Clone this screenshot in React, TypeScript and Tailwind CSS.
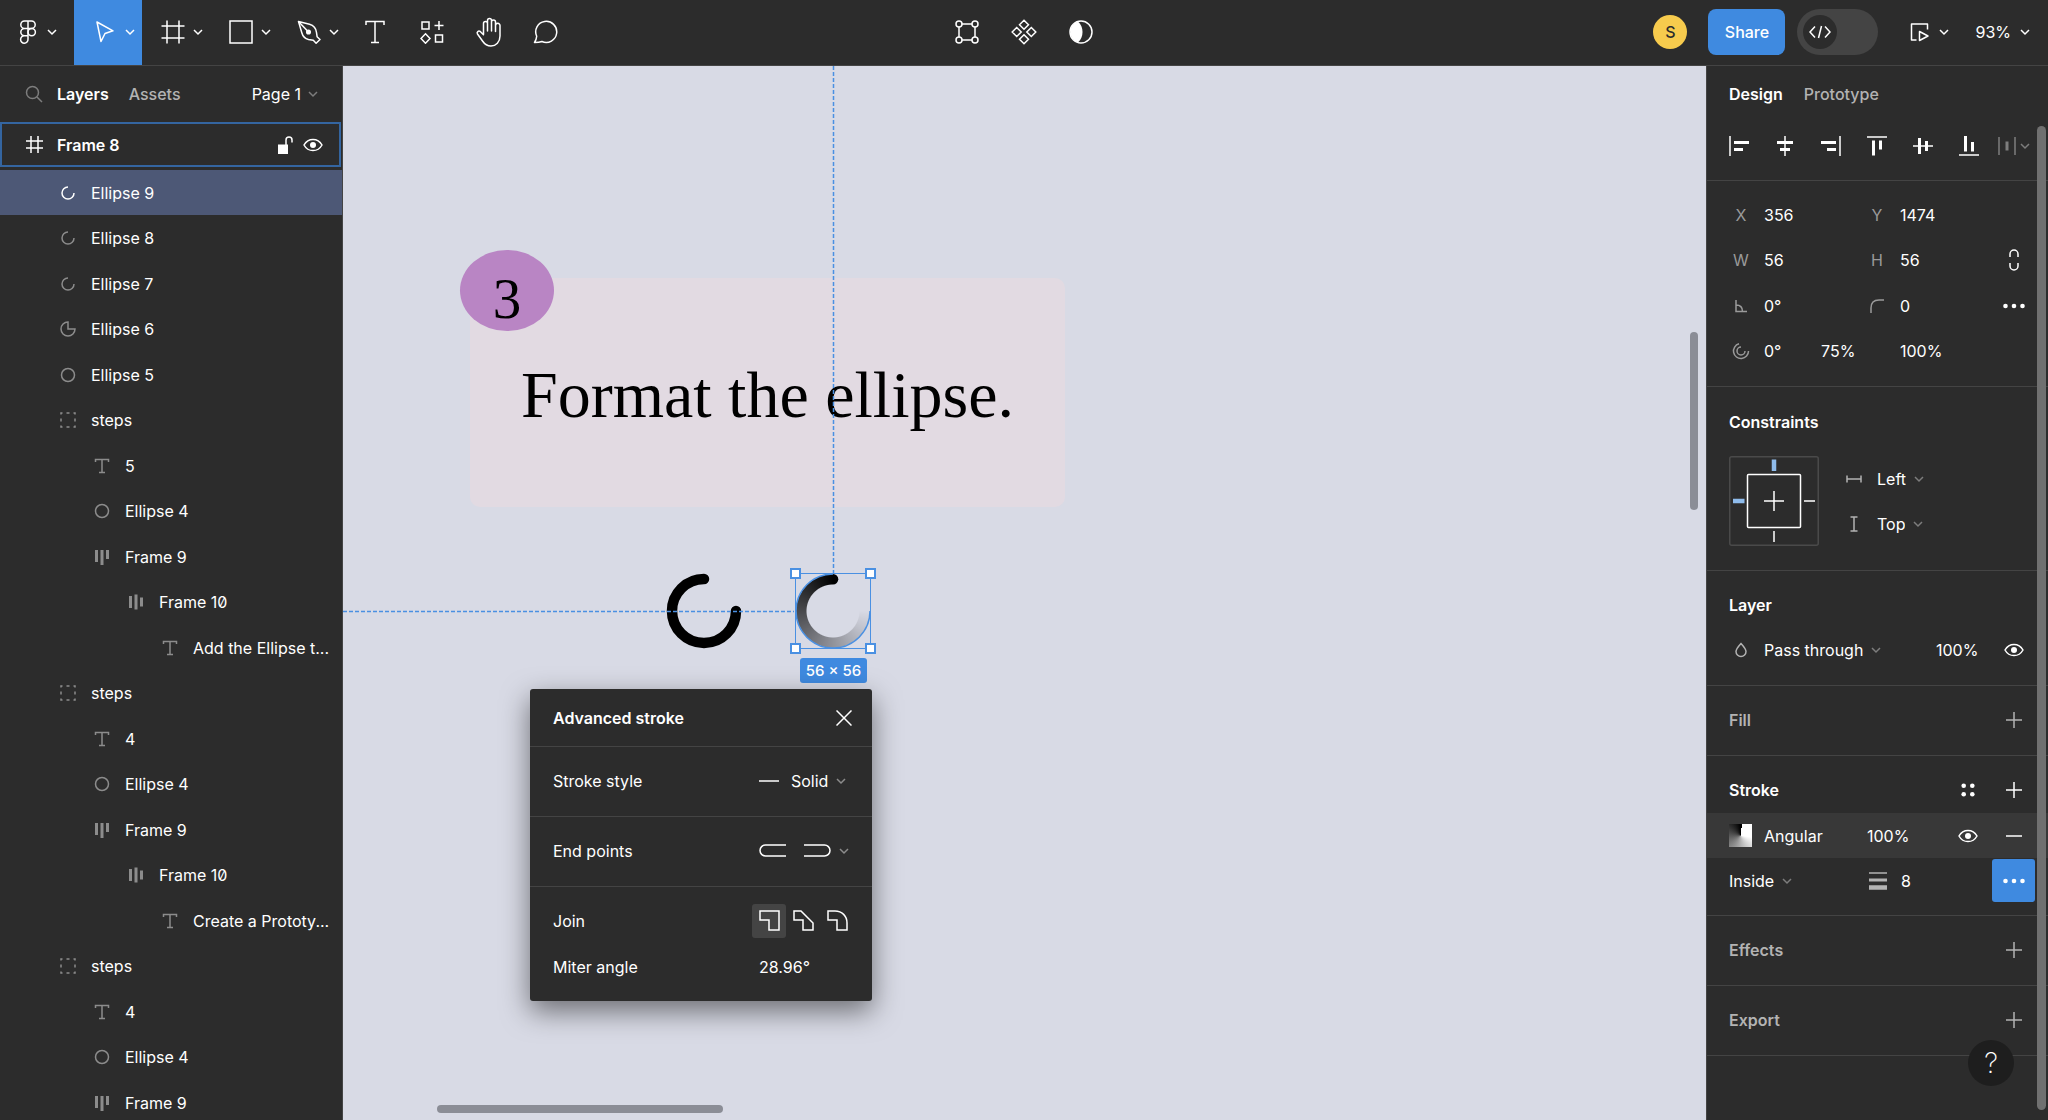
import type { ReactNode } from 'react';

const FONT = "font-['Inter','Liberation_Sans',sans-serif]";

interface SvgProps {
  w?: number;
  h?: number;
  sw?: number;
  className?: string;
  children: ReactNode;
}

function Svg({ w = 24, h = 24, sw = 1.5, className = '', children }: SvgProps) {
  return (
    <svg width={w} height={h} viewBox={`0 0 ${w} ${h}`} fill="none" stroke="currentColor" strokeWidth={sw}
      className={`shrink-0 ${className}`} aria-hidden="true">
      {children}
    </svg>
  );
}

const Chevron = ({ className = '' }: { className?: string }) => (
  <Svg w={10} h={10} className={className}><path d="M1 3l4 4 4-4" /></Svg>
);

const Plus = () => <Svg w={16} h={16}><path d="M8 0v16M0 8h16" /></Svg>;

const Dots = () => (
  <Svg w={22} h={6}>
    <g fill="currentColor" stroke="none"><circle cx="2.5" cy="3" r="2.3" /><circle cx="11" cy="3" r="2.3" /><circle cx="19.5" cy="3" r="2.3" /></g>
  </Svg>
);

const Eye = () => (
  <Svg w={20} h={14}>
    <path d="M1 7c2-3.6 5-5.6 9-5.6S17 3.400 19 7c-2 3.600-5 5.600-9 5.600S3 10.600 1 7z" />
    <circle cx="10" cy="7" r="3" fill="currentColor" stroke="none" />
  </Svg>
);

/* ---------- Toolbar ---------- */

const tools = [
  { name: 'Move', active: true, icon: <Svg><path d="M4 2l16 8.800-8 2.700L8 21.500z" strokeLinejoin="round" /></Svg> },
  { name: 'Frame', icon: <Svg><path d="M6 .5v23M18 .5v23M.5 6h23M.5 18h23" /></Svg> },
  { name: 'Rectangle', icon: <Svg><rect x="1" y="1" width="22" height="22" /></Svg> },
  {
    name: 'Pen',
    icon: (
      <Svg>
        <path d="M1.500 1.500l11 2.800c4 1.200 6.500 4 7 8.200l.6 4.200 2.900 2.800-3.900 3.700-2.800-2.900-4.800-.8c-3.700-.8-5.700-3-6.700-6.700z" strokeLinejoin="round" />
        <path d="M1.500 1.500l9.500 10" />
        <circle cx="11.500" cy="12" r="1.800" fill="currentColor" />
      </Svg>
    ),
  },
];

const plainTools = [
  { name: 'Text', icon: <Svg><path d="M3 5V1.500h18V5M12 1.500v21M8 22.500h8" /></Svg> },
  {
    name: 'Resources',
    icon: <Svg><path d="M2 2h7v7H2zM15.500 15h7v7h-7zM19 1v9M14.500 5.500h9M5.500 13.800l4.500 4.700-4.500 4.700L1 18.500z" /></Svg>,
  },
  {
    name: 'Hand',
    icon: (
      <Svg w={28} h={30}>
        <path d="M8.500 17V6.500a2 2 0 0 1 4 0V14m0-8V3.500a2 2 0 0 1 4 0V14m0-9a2 2 0 0 1 4 0v9.500m0-6a2 2 0 0 1 4.500 0V19c0 6-4 10-9 10-4.500 0-6.500-2-8.500-5l-5-7c-1.200-2 1-3.800 3-2.300l3 3" strokeLinejoin="round" strokeLinecap="round" />
      </Svg>
    ),
  },
  { name: 'Comment', icon: <Svg w={26}><path d="M1.500 22.500c1.200-1.800 2-3.800 2.200-6.200a10.500 10.500 0 1 1 5.300 5.200c-2.300.8-4.800 1-7.500 1z" strokeLinejoin="round" /></Svg> },
];

const centerTools = [
  {
    name: 'Edit object',
    icon: (
      <Svg>
        <circle cx="4" cy="4" r="3" /><circle cx="20" cy="4" r="3" /><circle cx="4" cy="20" r="3" /><circle cx="20" cy="20" r="3" />
        <path d="M7 4h10M7 20h10M4 7v10M20 7v10" />
      </Svg>
    ),
  },
  {
    name: 'Create component',
    icon: (
      <Svg w={26} h={26}>
        <path d="M13 1.200l4.500 4.500-4.500 4.500-4.500-4.500zM13 15.800l4.500 4.500-4.500 4.500-4.500-4.500zM5.700 8.500l4.500 4.500-4.500 4.500L1.200 13zM20.300 8.500l4.500 4.500-4.500 4.500-4.500-4.500z" />
      </Svg>
    ),
  },
  {
    name: 'Use as mask',
    icon: <Svg><circle cx="12" cy="12" r="11" /><path d="M9 1.500c6 5.500 6 15.500 0 21A11 11 0 0 1 9 1.500z" fill="currentColor" stroke="none" /></Svg>,
  },
];

function Toolbar() {
  return (
    <header className="grid grid-cols-[1fr_auto_1fr] h-[66px] shrink-0 border-b border-[#444444]">
      <div className="flex">
        <button aria-label="Main menu" className="flex items-center gap-[7px] pl-4 pb-0.5 w-[74px]">
          <Svg>
            <path d="M12 1H8.500a3.700 3.700 0 0 0 0 7.400H12zM12 8.400H8.500a3.700 3.700 0 0 0 0 7.400H12zM12 1h3.500a3.700 3.700 0 0 1 0 7.400H12zM12 15.800v3.500a3.700 3.700 0 1 1-3.500-3.500z" />
            <circle cx="15.700" cy="12.100" r="3.700" />
          </Svg>
          <Chevron />
        </button>
        {tools.map((t) => (
          <button key={t.name} aria-label={t.name}
            className={`flex items-center gap-2 pl-[19px] pb-0.5 w-[68px] ${t.active ? 'bg-[#3f8ae0]' : ''}`}>
            {t.icon}
            <Chevron />
          </button>
        ))}
        {plainTools.map((t) => (
          <button key={t.name} aria-label={t.name} className="flex items-center justify-center pb-0.5 w-[57px]">{t.icon}</button>
        ))}
      </div>

      <div className="flex">
        {centerTools.map((t) => (
          <button key={t.name} aria-label={t.name} className="flex items-center justify-center pb-0.5 w-[57px]">{t.icon}</button>
        ))}
      </div>

      <div className="flex items-center justify-end pr-[18px] pb-0.5">
        <span className="flex items-center justify-center size-[34px] mr-[21px] rounded-full bg-[#f7cb4d] text-[#2c2c2c] font-medium">S</span>
        <button className="h-[46px] w-[77px] mr-3 rounded-lg bg-[#3f8ae0] font-medium">Share</button>
        <label className="flex items-center w-[81px] h-[46px] px-1.5 mr-8 rounded-full bg-[#444444]">
          <input type="checkbox" role="switch" aria-label="Dev Mode" className="sr-only" />
          <span className="flex items-center justify-center size-[34px] rounded-full bg-[#2c2c2c]">
            <Svg w={22} h={14}><path d="M6 1.500L1 7l5 5.500M16 1.500L21 7l-5 5.500M12.500 1l-3 12" /></Svg>
          </span>
        </label>
        <button aria-label="Present" className="flex items-center gap-[9px] mr-[26px]">
          <Svg w={20} h={20}><path d="M6.500 18H1.500V2h16v5.500M9.500 9.500v9l8.500-4.500z" strokeLinejoin="round" /></Svg>
          <Chevron />
        </button>
        <button className="flex items-center gap-[9px]">93% <Chevron /></button>
      </div>
    </header>
  );
}

/* ---------- Layers panel ---------- */

const layerIcons = {
  arc: <Svg w={16} h={16}><path d="M8 2a6 6 0 1 0 6 6" /></Svg>,
  pie: <Svg w={16} h={16}><path d="M8 1a7 7 0 1 0 7 7H8z" /></Svg>,
  ellipse: <Svg w={16} h={16}><circle cx="8" cy="8" r="6.500" /></Svg>,
  group: <Svg w={16} h={16}><path d="M1 2.500V1h1.500M6.500 1h3M13.500 1H15v1.500M15 6.500v3M15 13.500V15h-1.500M9.500 15h-3M2.500 15H1v-1.500M1 9.500v-3" /></Svg>,
  text: <Svg w={16} h={16}><path d="M1.500 4V1.500h13V4M8 1.500v13M5 14.500h6" /></Svg>,
  top: <Svg w={16} h={16} sw={3}><path d="M2.500 1v12M8 1v15M13.500 1v9" /></Svg>,
  center: <Svg w={16} h={16} sw={3}><path d="M2.500 2v12M8 .5v15M13.500 3.500v9" /></Svg>,
};

type LayerKind = keyof typeof layerIcons;

const layers: { name: string; kind: LayerKind; depth: number; selected?: boolean }[] = [
  { name: 'Ellipse 9', kind: 'arc', depth: 0, selected: true },
  { name: 'Ellipse 8', kind: 'arc', depth: 0 },
  { name: 'Ellipse 7', kind: 'arc', depth: 0 },
  { name: 'Ellipse 6', kind: 'pie', depth: 0 },
  { name: 'Ellipse 5', kind: 'ellipse', depth: 0 },
  { name: 'steps', kind: 'group', depth: 0 },
  { name: '5', kind: 'text', depth: 1 },
  { name: 'Ellipse 4', kind: 'ellipse', depth: 1 },
  { name: 'Frame 9', kind: 'top', depth: 1 },
  { name: 'Frame 10', kind: 'center', depth: 2 },
  { name: 'Add the Ellipse t...', kind: 'text', depth: 3 },
  { name: 'steps', kind: 'group', depth: 0 },
  { name: '4', kind: 'text', depth: 1 },
  { name: 'Ellipse 4', kind: 'ellipse', depth: 1 },
  { name: 'Frame 9', kind: 'top', depth: 1 },
  { name: 'Frame 10', kind: 'center', depth: 2 },
  { name: 'Create a Prototy...', kind: 'text', depth: 3 },
  { name: 'steps', kind: 'group', depth: 0 },
  { name: '4', kind: 'text', depth: 1 },
  { name: 'Ellipse 4', kind: 'ellipse', depth: 1 },
  { name: 'Frame 9', kind: 'top', depth: 1 },
];

const indent = ['pl-[60px]', 'pl-[94px]', 'pl-[128px]', 'pl-[162px]'];

function LayersPanel() {
  return (
    <aside className="flex flex-col w-[343px] shrink-0 border-r border-[#444444] overflow-hidden">
      <div className="flex items-center h-14 shrink-0 pl-[25px] pr-6">
        <button aria-label="Search" className="mr-[14px] text-[#7d7d7d]">
          <Svg w={18} h={18}><circle cx="7.500" cy="7.500" r="6" /><path d="M12 12l5 5" /></Svg>
        </button>
        <button className="font-semibold">Layers</button>
        <button className="ml-5 font-medium text-[#b3b3b3]">Assets</button>
        <button className="flex items-center gap-[7px] ml-auto">Page 1 <Chevron className="text-[#7d7d7d]" /></button>
      </div>

      <div className="flex items-center h-[45px] shrink-0 pl-6 pr-4 mr-px border-2 border-[#3465a0]">
        <Svg w={17} h={17}><path d="M5 0v17M12 0v17M0 5h17M0 12h17" /></Svg>
        <span className="ml-[14px] font-semibold">Frame 8</span>
        <button aria-label="Unlock" className="ml-auto">
          <Svg w={15} h={18}><path d="M0 8.500h10V18H0z" fill="currentColor" stroke="none" /><path d="M8 9V4a3 3 0 0 1 6 0v2.500" /></Svg>
        </button>
        <button aria-label="Hide" className="ml-2.5"><Eye /></button>
      </div>

      <ul className="mt-[3px]">
        {layers.map((l, i) => (
          <li key={i}
            className={`flex items-center gap-[15px] odd:h-[45px] even:h-[46px] ${indent[l.depth]} ${l.selected ? 'bg-[#4d5876]' : ''}`}>
            <span className={l.selected ? 'text-white' : 'text-[#8c8c8c]'}>{layerIcons[l.kind]}</span>
            <span className="slashed-zero whitespace-nowrap">{l.name}</span>
          </li>
        ))}
      </ul>
    </aside>
  );
}

/* ---------- Canvas ---------- */

function Row({ label, children }: { label: string; children: ReactNode }) {
  return (
    <div className="flex items-center h-[70px] border-t border-[#444444] pl-[23px] pb-0.5">
      <span className="w-[206px]">{label}</span>
      {children}
    </div>
  );
}

const joins = [
  { name: 'Miter', on: true, d: 'M1 1h19v19h-10v-10H1z' },
  { name: 'Bevel', on: false, d: 'M1 1h7l12 12v7h-10v-10H1z' },
  { name: 'Round', on: false, d: 'M1 1h7c7 0 12 5 12 12v7h-10v-10H1z' },
];

function AdvancedStroke() {
  return (
    <section aria-label="Advanced stroke"
      className="absolute left-[187px] top-[623px] w-[342px] h-[312px] rounded-[3px] bg-[#2c2c2c] shadow-[0_10px_28px_rgba(0,0,0,0.5)]">
      <div className="flex items-center justify-between h-[57px] pl-[23px] pr-5">
        <h2 className="font-semibold">Advanced stroke</h2>
        <button aria-label="Close"><Svg w={16} h={16}><path d="M.5.500l15 15M15.500.500l-15 15" /></Svg></button>
      </div>
      <Row label="Stroke style">
        <Svg w={20} h={2}><path d="M0 1h20" /></Svg>
        <select aria-label="Stroke style" className="appearance-none field-sizing-content ml-3 mr-2"><option>Solid</option></select>
        <Chevron className="text-[#8c8c8c]" />
      </Row>
      <Row label="End points">
        <button aria-label="End points" className="flex items-center">
          <Svg w={27} h={13}><path d="M27 1H6.500a5.500 5.500 0 0 0 0 11H27" /></Svg>
          <Svg w={27} h={13} className="ml-[18px] mr-2"><path d="M0 1h20.500a5.500 5.500 0 0 1 0 11H0" /></Svg>
          <Chevron className="text-[#8c8c8c]" />
        </button>
      </Row>
      <Row label="Join">
        <div className="flex -ml-[7px]">
          {joins.map((j) => (
            <button key={j.name} aria-label={j.name}
              className={`flex items-center justify-center size-[34px] rounded-[3px] ${j.on ? 'bg-[#444444]' : ''}`}>
              <Svg w={21} h={21}><path d={j.d} /></Svg>
            </button>
          ))}
        </div>
      </Row>
      <div className="flex items-center h-[22px] pl-[23px]">
        <label htmlFor="miter" className="w-[206px]">Miter angle</label>
        <input id="miter" defaultValue="28.96°" className="w-20 bg-transparent" />
      </div>
    </section>
  );
}

function Canvas() {
  const handle = 'absolute size-[11px] bg-white border-2 border-[#4a90e2]';
  return (
    <main className="relative flex-1 min-w-0 overflow-hidden bg-[#d8dae5]">
      <div className="absolute left-[127px] top-[212px] w-[595px] h-[229px] flex items-center justify-center pt-1 rounded-[10px] bg-[#e2dae2] text-black">
        <p className="font-['Liberation_Serif',serif] text-[66px] leading-[70px] whitespace-nowrap">Format the ellipse.</p>
      </div>
      <div className="absolute left-[117px] top-[184px] w-[94px] h-[81px] flex items-center justify-center pt-4 rounded-[50%] bg-[#b985c4] text-black font-['Liberation_Serif',serif] text-[57px] leading-[60px]">
        3
      </div>

      {/* Plain ring and distance guides */}
      <svg className="absolute left-0 top-0 w-full h-full pointer-events-none" aria-hidden="true">
        <path d="M361 513a32 32 0 1 0 32 32" fill="none" stroke="#000" strokeWidth="10.500" strokeLinecap="round" />
        <path d="M490.500 0v507M0 545.500h451" stroke="#4a90e2" strokeWidth="1.500" strokeDasharray="4 2" />
      </svg>

      {/* Selected ellipse */}
      <div className="absolute left-[452px] top-[507px] size-[76px] border border-[#4a90e2]">
        <div className="size-[74px] rounded-full bg-[conic-gradient(transparent_90deg,#0000001a_120deg,#000000_360deg)] [mask:radial-gradient(circle,transparent_26px,#000_27px)]" />
        <svg className="absolute inset-0" width="74" height="74" fill="none" aria-hidden="true">
          <path d="M37 0a5.300 5.300 0 0 1 0 10.600z" fill="#000" />
          <path d="M74 37A37 37 0 1 1 37 0" stroke="#4a90e2" strokeWidth="1.500" />
        </svg>
        <span className={`${handle} -left-1.5 -top-1.5`} />
        <span className={`${handle} -right-1.5 -top-1.5`} />
        <span className={`${handle} -left-1.5 -bottom-1.5`} />
        <span className={`${handle} -right-1.5 -bottom-1.5`} />
      </div>
      <span className="absolute left-[457px] top-[592px] w-[67px] h-[25px] flex items-center justify-center rounded-[3px] bg-[#3f8ae0] text-[15px] font-medium">56 × 56</span>

      <AdvancedStroke />

      {/* Scrollbars */}
      <div className="absolute right-2 top-[266px] w-2 h-[178px] rounded-full bg-[#8b8d96]" />
      <div className="absolute left-[94px] bottom-[7px] w-[286px] h-2 rounded-full bg-[#8b8d96]" />
    </main>
  );
}

/* ---------- Design panel ---------- */

const aligns = [
  { name: 'Align left', d: 'M1 0v20', bars: 'M5 6.500h15M5 13.500h9' },
  { name: 'Align horizontal centers', d: 'M10 0v20', bars: 'M2 6.500h16M5 13.500h10' },
  { name: 'Align right', d: 'M19 0v20', bars: 'M0 6.500h15M6 13.500h9' },
  { name: 'Align top', d: 'M0 1h20', bars: 'M6.500 4.500v15M13.500 4.500v9' },
  { name: 'Align vertical centers', d: 'M0 10h20', bars: 'M6.500 2v16M13.500 5v10' },
  { name: 'Align bottom', d: 'M0 19h20', bars: 'M6.500 0v15.500M13.500 6v9.500' },
];

function Field({ label, icon, value, width = 'w-16' }: { label: string; icon: ReactNode; value: string; width?: string }) {
  return (
    <label className="flex items-center">
      <span className="flex justify-center w-6 mr-[11px] text-[#9a9a9a]">{icon}</span>
      <input aria-label={label} defaultValue={value} className={`${width} bg-transparent`} />
    </label>
  );
}

const fieldRow = 'grid grid-cols-[136px_124px_1fr] items-center odd:h-[45px] even:h-[46px]';
const side = 'flex justify-center w-6';

function EmptySection({ title }: { title: string }) {
  return (
    <section className="flex items-center justify-between h-[70px] pl-[22px] pr-[22px] pb-0.5 border-b border-[#444444] text-[#b3b3b3]">
      <h2 className="font-semibold">{title}</h2>
      <button aria-label={`Add ${title}`} className={side}><Plus /></button>
    </section>
  );
}

function DesignPanel() {
  return (
    <aside className="relative w-[342px] shrink-0 border-l border-[#444444] overflow-hidden">
      <div className="h-[115px] border-b border-[#444444]">
        <div className="flex items-center gap-[21px] h-14 pl-[22px]">
          <button className="font-semibold">Design</button>
          <button className="font-medium text-[#b3b3b3]">Prototype</button>
        </div>
        <div className="flex items-center h-12 pl-[9px]">
          {aligns.map((a) => (
            <button key={a.name} aria-label={a.name} className="flex justify-center flex-[0_0_46px]">
              <Svg w={20} h={20}><path d={a.d} /><path d={a.bars} strokeWidth="3" /></Svg>
            </button>
          ))}
          <button aria-label="More align options" className="flex items-center gap-1 ml-1.5 text-[#7d7d7d]">
            <Svg w={18} h={20}><path d="M1 1v18M17 1v18" /><path d="M9 5.500v9" strokeWidth="3" /></Svg>
            <Chevron />
          </button>
        </div>
      </div>

      <section className="h-[206px] pl-[22px] pt-[11px] border-b border-[#444444]">
        <div className={fieldRow}>
          <Field label="X position" icon="X" value="356" />
          <Field label="Y position" icon="Y" value="1474" />
        </div>
        <div className={fieldRow}>
          <Field label="Width" icon="W" value="56" />
          <Field label="Height" icon="H" value="56" />
          <button aria-label="Constrain proportions" className="flex justify-center w-[50px]">
            <Svg w={10} h={22}><path d="M1 8V5a4 4 0 0 1 8 0v3M1 14v3a4 4 0 0 0 8 0v-3" /></Svg>
          </button>
        </div>
        <div className={fieldRow}>
          <Field label="Rotation" icon={<Svg w={14} h={14}><path d="M2 1v11.500h11M2 6c4 0 6.500 2.500 6.500 6.500" /></Svg>} value="0°" />
          <Field label="Corner radius" icon={<Svg w={14} h={14}><path d="M1 14V9c0-5 3-8 8-8h5" /></Svg>} value="0" />
          <button aria-label="Independent corners" className="flex justify-center w-[50px]"><Dots /></button>
        </div>
        <div className={fieldRow}>
          <div className="flex items-center">
            <Field label="Arc start" width="w-[57px]" value="0°"
              icon={<Svg w={18} h={18}><path d="M7 1.800a7.500 7.500 0 1 0 9.500 7.200M9 5a4 4 0 1 0 4 4" /></Svg>} />
            <input aria-label="Arc sweep" defaultValue="75%" className="w-10 bg-transparent" />
          </div>
          <input aria-label="Arc ratio" defaultValue="100%" className="w-16 ml-[35px] bg-transparent" />
        </div>
      </section>

      <section className="h-[184px] px-[22px] pt-[23px] border-b border-[#444444]">
        <h2 className="font-semibold">Constraints</h2>
        <div className="flex mt-[22px]">
          <svg width="90" height="90" fill="none" stroke="#fff" strokeWidth="1.500" aria-hidden="true">
            <rect x=".75" y=".75" width="88.500" height="88.500" rx="2" stroke="#4a4a4a" />
            <rect x="18.500" y="18.500" width="53" height="53" rx="1" />
            <path d="M45 35v20M35 45h20M75 45h11M45 75v11" />
            <path d="M45 3.500v11.500M4 45h11.500" stroke="#8fbcec" strokeWidth="4.500" />
          </svg>
          <div className="ml-[27px]">
            <label className="flex items-center h-[45px]">
              <Svg w={16} h={16} className="text-[#b3b3b3]"><path d="M1 4.500v7M15 4.500v7M1 8h14" /></Svg>
              <select aria-label="Horizontal" className="appearance-none field-sizing-content ml-[15px] mr-2"><option>Left</option></select>
              <Chevron className="text-[#7d7d7d]" />
            </label>
            <label className="flex items-center h-[45px]">
              <Svg w={16} h={16} className="text-[#b3b3b3]"><path d="M4.500 1h7M4.500 15h7M8 1v14" /></Svg>
              <select aria-label="Vertical" className="appearance-none field-sizing-content ml-[15px] mr-2"><option>Top</option></select>
              <Chevron className="text-[#7d7d7d]" />
            </label>
          </div>
        </div>
      </section>

      <section className="h-[115px] pl-[22px] pr-[22px] pt-[22px] border-b border-[#444444]">
        <h2 className="font-semibold">Layer</h2>
        <div className="flex items-center mt-[21px]">
          <span className="flex justify-center w-6 mr-[11px] text-[#b3b3b3]">
            <Svg w={14} h={16}><path d="M7 1.500c3 3.300 5 5.500 5 8a5 5 0 0 1-10 0c0-2.500 2-4.700 5-8z" /></Svg>
          </span>
          <select aria-label="Blend mode" className="appearance-none field-sizing-content mr-2"><option>Pass through</option></select>
          <Chevron className="text-[#7d7d7d]" />
          <input aria-label="Layer opacity" defaultValue="100%" className="ml-auto w-[45px] mr-[21px] bg-transparent" />
          <button aria-label="Hide layer" className={side}><Eye /></button>
        </div>
      </section>

      <EmptySection title="Fill" />

      <section className="h-40 border-b border-[#444444]">
        <div className="flex items-center h-[57px] pt-[11px] pl-[22px] pr-[22px]">
          <h2 className="font-semibold mr-auto">Stroke</h2>
          <button aria-label="Styles" className={`${side} mr-[22px]`}>
            <Svg w={14} h={14}>
              <g fill="currentColor" stroke="none"><circle cx="2.700" cy="2.700" r="2.300" /><circle cx="11.300" cy="2.700" r="2.300" /><circle cx="2.700" cy="11.300" r="2.300" /><circle cx="11.300" cy="11.300" r="2.300" /></g>
            </Svg>
          </button>
          <button aria-label="Add stroke" className={side}><Plus /></button>
        </div>
        <div className="flex items-center h-[45px] pl-[22px] pr-[22px] bg-[#383838]">
          <button aria-label="Stroke color" className="size-[23px] mr-3 bg-[conic-gradient(from_8deg,#fff_0deg,#fff_90deg,#000_352deg)]" />
          <input aria-label="Stroke type" defaultValue="Angular" className="w-[103px] bg-transparent" />
          <input aria-label="Stroke opacity" defaultValue="100%" className="w-[45px] bg-transparent" />
          <button aria-label="Hide stroke" className={`${side} ml-auto mr-[22px]`}><Eye /></button>
          <button aria-label="Remove stroke" className={side}><Svg w={16} h={2}><path d="M0 1h16" /></Svg></button>
        </div>
        <div className="flex items-center h-[45px] pl-[22px] pr-[13px]">
          <select aria-label="Stroke position" className="appearance-none field-sizing-content mr-2"><option>Inside</option></select>
          <Chevron className="text-[#7d7d7d]" />
          <label className="flex items-center ml-auto mr-[27px] w-24">
            <Svg w={18} h={18} className="mr-[14px] text-[#b3b3b3]">
              <path d="M0 1h18" /><path d="M0 8h18" strokeWidth="3" /><path d="M0 15.500h18" strokeWidth="4.500" />
            </Svg>
            <input aria-label="Stroke weight" defaultValue="8" className="w-12 bg-transparent" />
          </label>
          <button aria-label="Advanced stroke" className="flex items-center justify-center size-[43px] rounded-[3px] bg-[#3f8ae0]"><Dots /></button>
        </div>
      </section>

      <EmptySection title="Effects" />
      <EmptySection title="Export" />

      <div className="absolute right-[2px] top-[60px] bottom-[10px] w-[9px] rounded-full bg-[#707070]" />
      <button aria-label="Help"
        className="absolute right-[34px] bottom-[34px] flex items-center justify-center size-[46px] rounded-full bg-[#1e1e1e] text-[28px] font-extralight">
        ?
      </button>
    </aside>
  );
}

export default function App() {
  return (
    <div className={`flex flex-col h-screen overflow-hidden bg-[#2c2c2c] text-white text-base leading-6 ${FONT}`}>
      <Toolbar />
      <div className="flex flex-1 min-h-0">
        <LayersPanel />
        <Canvas />
        <DesignPanel />
      </div>
    </div>
  );
}
